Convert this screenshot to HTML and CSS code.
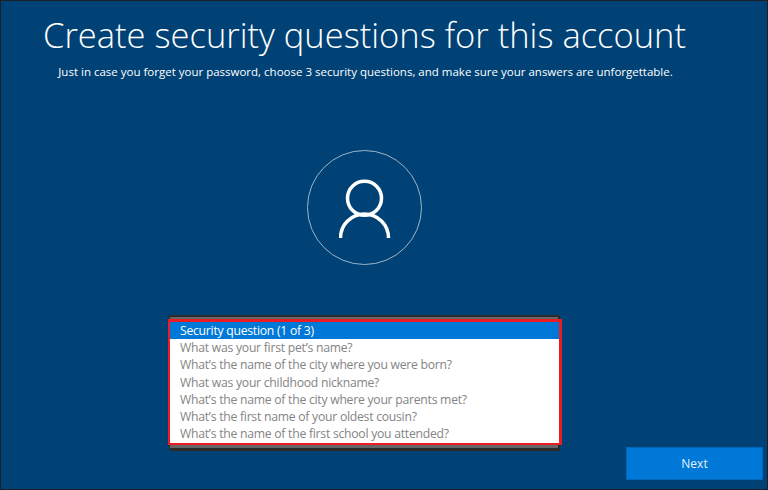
FILE: index.html
```html
<!DOCTYPE html>
<html lang="en">
<head>
<meta charset="utf-8">
<title>Create security questions</title>
<link rel="stylesheet" href="styles.css">
</head>
<body>
<main class="screen">
  <h1 class="title">Create security questions for this account</h1>
  <p class="subtitle">Just in case you forget your password, choose 3 security questions, and make sure your answers are unforgettable.</p>
  <div class="avatar">
    <svg class="avatar-icon" viewBox="0 0 52 60" width="52" height="60" aria-hidden="true">
      <circle cx="25.5" cy="20.3" r="17" fill="none" stroke="#fff" stroke-width="3.5"/>
      <path d="M1.5 60 A24 24 0 0 1 49.5 60" fill="none" stroke="#fff" stroke-width="3.5"/>
    </svg>
  </div>
  <div class="dropdown">
    <ul class="options">
      <li class="option selected">Security question (1 of 3)</li>
      <li class="option">What was your first pet’s name?</li>
      <li class="option">What’s the name of the city where you were born?</li>
      <li class="option">What was your childhood nickname?</li>
      <li class="option">What’s the name of the city where your parents met?</li>
      <li class="option">What’s the first name of your oldest cousin?</li>
      <li class="option">What’s the name of the first school you attended?</li>
    </ul>
  </div>
  <button class="next" type="button">Next</button>
</main>
</body>
</html>
```
FILE: styles.css
```css
* { box-sizing: border-box; }
html, body { margin: 0; padding: 0; }
body { width: 768px; height: 490px; overflow: hidden; background: #004275; }
.screen {
  width: 768px;
  height: 490px;
  padding-right: 39px;
  border: 1px solid #1c2026;
  display: flex;
  flex-direction: column;
  align-items: center;
  font-family: "Open Sans", sans-serif;
  color: #fff;
}
.title {
  margin: 9px 0 0;
  font-size: 34.5px;
  line-height: 50px;
  font-weight: 300;
  white-space: nowrap;
}
.subtitle {
  margin: 4px 0 0 2px;
  font-size: 11.5px;
  line-height: 16px;
  white-space: nowrap;
}
.avatar {
  margin-top: 70px;
  width: 115px;
  height: 115px;
  border: 1px solid #9db5c9;
  border-radius: 50%;
  display: flex;
  align-items: center;
  justify-content: center;
}
.avatar-icon { flex: none; }
.dropdown {
  margin-top: 50px;
  width: 391px;
  height: 136px;
  padding: 2px 0 0;
  background: #666;
  border: solid #2b2b2b;
  border-width: 2px 2px 3px 1px;
}
.options {
  list-style: none;
  margin: 0 -4px 0 -2px;
  padding: 0;
  height: 126px;
  background: #fff;
  border: solid #ed1c24;
  border-width: 3px 3px 2px 2px;
  font-size: 12.2px;
  letter-spacing: -0.25px;
  line-height: 17.2px;
}
.option { padding-left: 10px; color: #848484; white-space: nowrap; }
.selected { background: #0078d7; color: #fff; }
.next {
  align-self: flex-end;
  margin: -4px -35px 0 0;
  width: 137px;
  height: 33px;
  border: 1px solid #0067b8;
  background: #0078d7;
  color: #e4f1fb;
  font: 12px "Open Sans", sans-serif;
}
```
